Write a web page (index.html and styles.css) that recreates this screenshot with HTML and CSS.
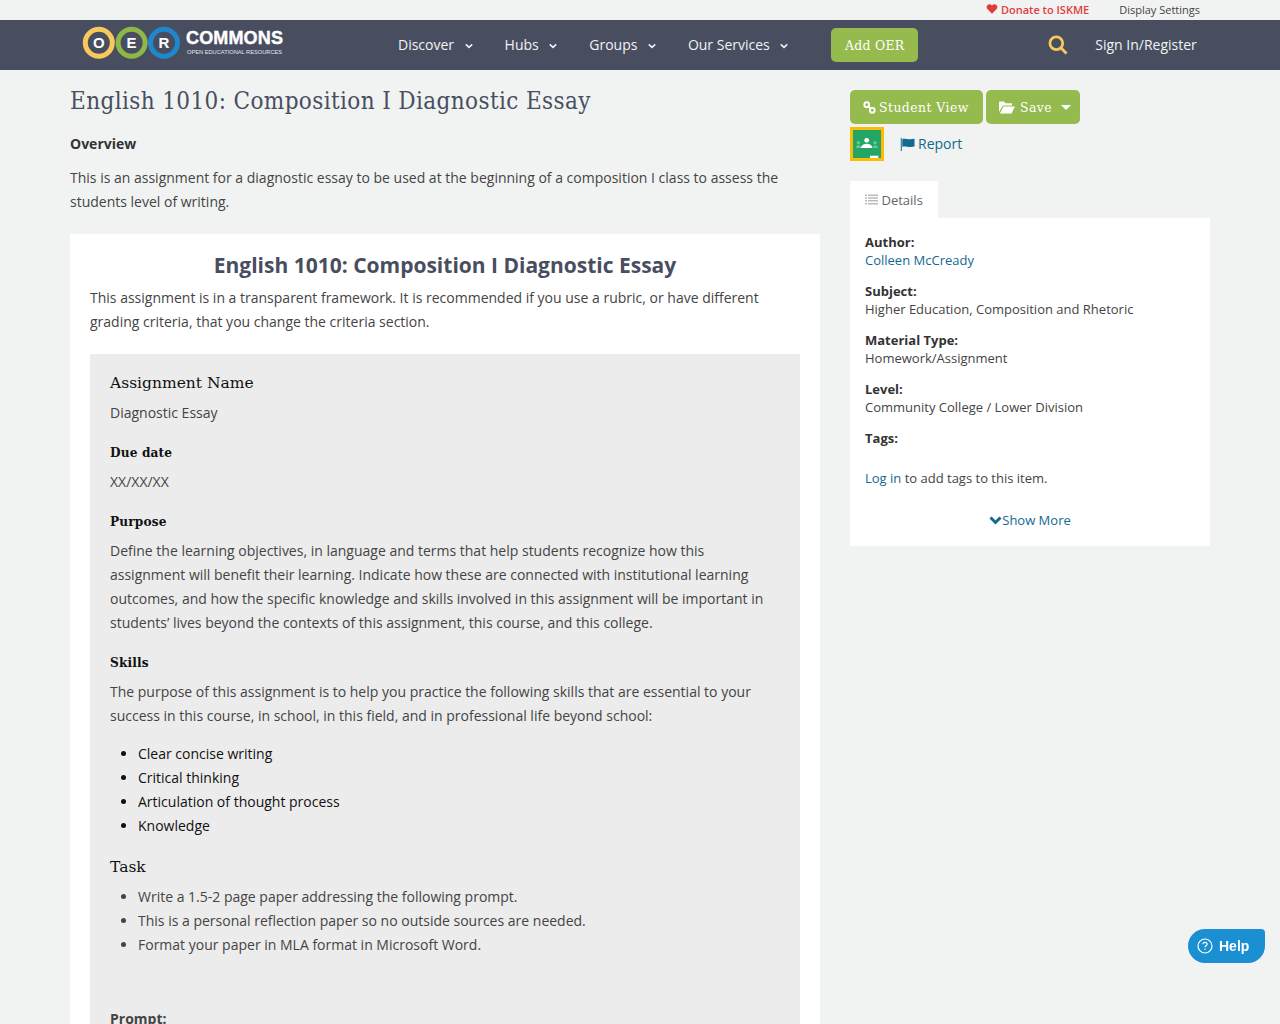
FILE: index.html
```html
<!DOCTYPE html>
<html lang="en">
<head>
<meta charset="utf-8">
<title>English 1010: Composition I Diagnostic Essay</title>
<link rel="stylesheet" href="styles.css">
</head>
<body>
<div class="topbar">
  <a class="donate" href="#"><svg class="ico-heart" viewBox="0 0 24 22"><path d="M12 21.500 2.300 11.600C-.6 8.600-.4 4.200 2.300 2 5-.2 9 0 12 3.600 15 0 19-.2 21.700 2c2.700 2.200 2.900 6.600 0 9.600z"/></svg> Donate to ISKME</a>
  <a class="display" href="#">Display Settings</a>
</div>
<header class="nav">
  <a class="logo" href="#">
    <svg class="logo-svg" width="210" height="50" viewBox="0 0 210 50">
      <circle cx="16.800" cy="22.700" r="13.500" fill="#484e60" stroke="#f7c95c" stroke-width="5"/>
      <circle cx="49.600" cy="22.700" r="13.500" fill="#484e60" stroke="#8fb748" stroke-width="5"/>
      <circle cx="82" cy="22.700" r="13.500" fill="#484e60" stroke="#1f88cc" stroke-width="5"/>
      <text class="logo-l" x="16.800" y="28" text-anchor="middle">O</text>
      <text class="logo-l" x="49.600" y="28" text-anchor="middle">E</text>
      <text class="logo-l" x="82" y="28" text-anchor="middle">R</text>
      <text class="logo-t" x="104" y="23.500">COMMONS</text>
      <text class="logo-s" x="105" y="33.500">OPEN EDUCATIONAL RESOURCES</text>
    </svg>
  </a>
  <nav class="menu">
    <a class="menu-item" href="#">Discover<svg class="chev" viewBox="0 0 10 7"><path d="M1 1.500 5 5.300 9 1.500"/></svg></a>
    <a class="menu-item" href="#">Hubs<svg class="chev" viewBox="0 0 10 7"><path d="M1 1.500 5 5.300 9 1.500"/></svg></a>
    <a class="menu-item" href="#">Groups<svg class="chev" viewBox="0 0 10 7"><path d="M1 1.500 5 5.300 9 1.500"/></svg></a>
    <a class="menu-item" href="#">Our Services<svg class="chev" viewBox="0 0 10 7"><path d="M1 1.500 5 5.300 9 1.500"/></svg></a>
  </nav>
  <a class="add-btn" href="#">Add OER</a>
  <svg class="search" viewBox="0 0 20 20"><circle cx="8.300" cy="8.300" r="6.400"/><path d="M13 13l5.500 5.500"/></svg>
  <a class="signin" href="#">Sign In/Register</a>
</header>
<div class="page">
  <main class="main">
    <h1 class="title">English 1010: Composition I Diagnostic Essay</h1>
    <div class="overview-label">Overview</div>
    <p class="overview">This is an assignment for a diagnostic essay to be used at the beginning of a composition I class to assess the students level of writing.</p>
    <article class="card">
      <h2 class="card-title">English 1010: Composition I Diagnostic Essay</h2>
      <p class="card-intro">This assignment is in a transparent framework. It is recommended if you use a rubric, or have different grading criteria, that you change the criteria section.</p>
      <section class="well">
        <h3 class="h-light">Assignment Name</h3>
        <p class="para">Diagnostic Essay</p>
        <h3 class="h-bold">Due date</h3>
        <p class="para">XX/XX/XX</p>
        <h3 class="h-bold">Purpose</h3>
        <p class="para">Define the learning objectives, in language and terms that help students recognize how this assignment will benefit their learning. Indicate how these are connected with institutional learning outcomes, and how the specific knowledge and skills involved in this assignment will be important in students’ lives beyond the contexts of this assignment, this course, and this college.</p>
        <h3 class="h-bold">Skills</h3>
        <p class="para">The purpose of this assignment is to help you practice the following skills that are essential to your success in this course, in school, in this field, and in professional life beyond school:</p>
        <ul class="list list-dark">
          <li>Clear concise writing</li>
          <li>Critical thinking</li>
          <li>Articulation of thought process</li>
          <li>Knowledge</li>
        </ul>
        <h3 class="h-light h-task">Task</h3>
        <ul class="list">
          <li>Write a 1.5-2 page paper addressing the following prompt.</li>
          <li>This is a personal reflection paper so no outside sources are needed.</li>
          <li>Format your paper in MLA format in Microsoft Word.</li>
        </ul>
        <p class="prompt"><strong>Prompt:</strong></p>
      </section>
    </article>
  </main>
  <aside class="side">
    <div class="actions">
      <a class="btn btn-view" href="#"><svg class="ico-link" viewBox="0 0 14 14"><circle cx="4" cy="4" r="2.600"/><circle cx="10" cy="10" r="2.600"/><path d="M5.500 5.500l3 3"/></svg> Student View</a>
      <a class="btn btn-save" href="#"><svg class="ico-folder" viewBox="0 0 16 13"><path d="M0 1.500C0 .9 .4 .5 1 .5H5L6.500 2.300H12C12.600 2.300 13 2.700 13 3.300V4.500H4L0 11Z"/><path d="M4.500 5.500H16L12.500 12.500H.9Z"/></svg><span class="save-label">Save</span><span class="caret"></span></a>
    </div>
    <div class="tools">
      <a class="classroom" href="#"><svg width="28" height="28" viewBox="0 0 28 28"><rect width="28" height="28" fill="#22a565"/><circle cx="5.300" cy="12.700" r="1.700" fill="#6cc596"/><circle cx="22" cy="12.700" r="1.700" fill="#6cc596"/><path d="M2.700 18c.3-1.800 1.400-2.700 2.800-2.700S8 16 8.300 18zM19.500 18c.3-1.800 1.200-2.700 2.600-2.700s2.500.9 2.800 2.700z" fill="#6cc596"/><circle cx="13.700" cy="10.300" r="2.400" fill="#fff"/><path d="M8 18c.4-3 2.800-4.300 5.700-4.300s5.300 1.300 5.700 4.300z" fill="#fff"/><rect x="17" y="25.700" width="8.300" height="2.300" fill="#fff"/></svg></a>
      <a class="report" href="#"><svg class="ico-flag" viewBox="0 0 15 13"><path d="M.8 0v13h1V0z"/><path d="M2.300 1.200C5-.2 7.500 2.200 14.500 .8v7.700c-6 1.400-9.500-1-12.200.4z"/></svg> Report</a>
    </div>
    <div class="tab"><svg class="ico-list" viewBox="0 0 13 11"><path d="M0 .5h2v1.500H0zM3 .5h10v1.500H3zM0 3.300h2v1.500H0zM3 3.300h10v1.500H3zM0 6.100h2v1.500H0zM3 6.100h10v1.500H3zM0 8.900h2v1.500H0zM3 8.900h10v1.500H3z"/></svg> Details</div>
    <div class="details">
      <dl class="meta">
        <dt>Author:</dt><dd><a href="#">Colleen McCready</a></dd>
        <dt>Subject:</dt><dd>Higher Education, Composition and Rhetoric</dd>
        <dt>Material Type:</dt><dd>Homework/Assignment</dd>
        <dt>Level:</dt><dd>Community College / Lower Division</dd>
        <dt>Tags:</dt><dd class="tags"><a href="#">Log in</a> to add tags to this item.</dd>
      </dl>
      <a class="more" href="#"><svg class="ico-more" viewBox="0 0 13 9"><path d="M1.500 1.500 6.500 6.500 11.500 1.500"/></svg>Show More</a>
    </div>
  </aside>
</div>
<a class="help" href="#"><svg class="ico-help" viewBox="0 0 16 16"><circle cx="8" cy="8" r="7"/><path d="M5.900 6.200C6 4.900 7 4.300 8 4.300c1.200 0 2.100.8 2.100 1.900 0 1.500-2.100 1.600-2.100 3.100"/><path d="M8 10.700v1.400"/></svg>Help</a>
</body>
</html>
```
FILE: styles.css
```css
* { box-sizing: border-box; }
html, body { margin: 0; padding: 0; }
body {
  background: #f1f3f2;
  color: #333;
  font-family: "Open Sans", sans-serif;
  font-size: 14px;
  line-height: 24px;
}
a { text-decoration: none; color: #13698f; }
svg { display: inline-block; }

.topbar {
  height: 20px;
  display: flex;
  justify-content: flex-end;
  align-items: center;
  gap: 30px;
  padding-right: 80px;
  font-size: 11px;
  line-height: 20px;
}
.donate { color: #e03c3c; font-weight: 600; }
.display { color: #444; }
.ico-heart { width: 12px; height: 10px; fill: #e03c3c; }

.nav {
  height: 50px;
  background: #484e60;
  display: flex;
  align-items: center;
  position: relative;
  padding-left: 82px;
}
.logo { display: block; width: 210px; height: 50px; }
.logo-svg { display: block; }
.logo-l { font: bold 15px "Liberation Sans", sans-serif; fill: #fff; }
.logo-t { font: bold 18px "Liberation Sans", sans-serif; fill: #fff; stroke: #fff; stroke-width: .4px; letter-spacing: .15px; }
.logo-s { font: 5.700px "Liberation Sans", sans-serif; fill: #e4e6ea; }
.menu { display: flex; margin-left: 106px; }
.menu-item {
  color: #f1f3f2;
  font-size: 14px;
  display: flex;
  align-items: center;
  margin-right: 32px;
}
.chev { width: 8px; height: 6px; margin-left: 10.500px; margin-top: 2px; fill: none; stroke: #f1f3f2; stroke-width: 2; }
.add-btn {
  background: #95bb4f;
  color: #fff;
  font-family: "DejaVu Serif Condensed", "DejaVu Serif", serif;
  font-stretch: condensed;
  font-size: 13.800px;
  letter-spacing: .3px;
  line-height: 34px;
  height: 34px;
  width: 87px;
  text-align: center;
  border-radius: 5px;
  margin-left: 11px;
}
.search { width: 20px; height: 20px; margin-left: 130px; fill: none; stroke: #f7c95c; stroke-width: 2.800; }
.signin { color: #f1f3f2; font-size: 14px; margin-left: 27px; }

.page {
  width: 1140px;
  margin: 0 0 0 70px;
  display: flex;
  gap: 30px;
  align-items: flex-start;
}
.main { width: 750px; flex: none; }
.title {
  font-family: "DejaVu Serif Condensed", "DejaVu Serif", serif;
  font-stretch: condensed;
  font-weight: 400;
  font-size: 24px;
  letter-spacing: .38px;
  line-height: 30px;
  color: #484e60;
  margin: 16px 0 0;
}
.overview-label { font-weight: 700; margin-top: 16px; line-height: 24px; }
.overview { margin: 10px 0 20px; color: #444; }
.card { background: #fff; padding: 15px 20px 0; }
.card-title {
  font-size: 21px;
  line-height: 32px;
  font-weight: 700;
  color: #484e60;
  text-align: center;
  margin: 0;
}
.card-intro { margin: 5px 0 20px; color: #444; }
.well { background: #ececec; padding: 16px 20px 20px; color: #444; }
.h-light, .h-bold {
  font-family: "DejaVu Serif", serif;
  color: #111;
  font-size: 15.500px;
  line-height: 26px;
  margin: 0;
}
.h-light { font-weight: 400; }
.h-bold {
  font-family: "DejaVu Serif Condensed", "DejaVu Serif", serif;
  font-stretch: condensed;
  font-weight: 700;
  font-size: 13.500px;
  letter-spacing: .15px;
  margin-top: 14px;
}
.h-task { margin-top: 16px; }
.para { margin: 5px 0 0; }
.list { margin: 14px 0 0; padding-left: 28px; }
.list-dark { color: #111; }
.h-task + .list { margin-top: 5px; }
.prompt { margin: 50px 0 0; }

.side { width: 360px; flex: none; padding-top: 20px; }
.actions { display: flex; gap: 3px; }
.btn {
  background: #95bb4f;
  color: #fff;
  font-family: "DejaVu Serif Condensed", "DejaVu Serif", serif;
  font-stretch: condensed;
  font-size: 13.800px;
  letter-spacing: .45px;
  height: 34px;
  line-height: 34px;
  border-radius: 5px;
  padding: 0 13px;
  display: flex;
  align-items: center;
  gap: 3px;
}
.btn-view { width: 133px; }
.btn-save { width: 94px; }
.ico-link { width: 13px; height: 13px; fill: none; stroke: #fff; stroke-width: 2; flex: none; }
.ico-folder { width: 16px; height: 13px; fill: #fff; flex: none; }
.save-label { margin-left: 2px; }
.caret { border: 5px solid transparent; border-top-color: #fff; border-bottom: 0; margin-left: 6px; }
.tools { display: flex; align-items: center; margin-top: 3px; }
.classroom { display: block; width: 34px; height: 34px; border: 3px solid #fbbc05; }
.classroom svg { display: block; }
.report { margin-left: 16px; display: flex; align-items: center; gap: 3px; }
.ico-flag { width: 15px; height: 13px; fill: #13698f; }
.tab {
  background: #fff;
  width: 88px;
  height: 37px;
  margin-top: 20px;
  padding-left: 15px;
  font-size: 13px;
  line-height: 38px;
  color: #666;
  display: flex;
  align-items: center;
  gap: 3.500px;
}
.ico-list { width: 13px; height: 11px; fill: #bbb; }
.details { background: #fff; padding: 15px 15px 16px; font-size: 13px; line-height: 18px; height: 328px; }
.meta { margin: 0; }
.meta dt { font-weight: 700; color: #333; }
.meta dd { margin: 0 0 13px; color: #444; }
.meta .tags { margin-top: 22px; }
.more { display: flex; justify-content: center; align-items: center; margin-top: 24px; }
.ico-more { width: 13px; height: 9px; fill: none; stroke: #13698f; stroke-width: 3; margin-top: 1px; }

.help {
  position: fixed;
  left: 1188px;
  top: 929px;
  width: 77px;
  height: 34px;
  background: #1a8fd1;
  color: #fff;
  font: bold 14px/34px "Liberation Sans", sans-serif;
  border-radius: 17px 4px 17px 17px;
  display: flex;
  align-items: center;
  padding-left: 9px;
  gap: 6px;
}
.ico-help { width: 16px; height: 16px; fill: none; stroke: #fff; stroke-width: 1.200; }
```
